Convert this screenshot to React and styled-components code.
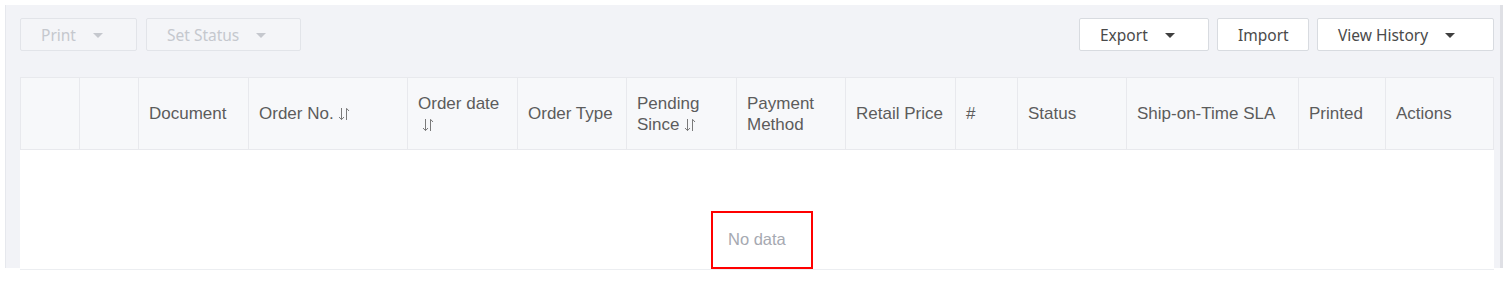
import React from "react";
import styled, { createGlobalStyle } from "styled-components";

const Global = createGlobalStyle`
  html, body { margin: 0; padding: 0; background: #ffffff; }
  body { font-family: "Liberation Sans", Arial, sans-serif; }
  * { box-sizing: border-box; }
`;

const Page = styled.div`
  width: 1508px;
  height: 281px;
  padding: 5px 5px 0 5px;
  background: #ffffff;
`;

const Panel = styled.div`
  height: 263px;
  background: #f2f3f7;
  border-left: 1px solid #e6e8ed;
  border-right: 3px solid #dfe0e5;
  padding: 13px 6px 0 14px;
  display: flex;
  flex-direction: column;
  gap: 26px;
`;

const Toolbar = styled.div`
  display: flex;
  align-items: center;
  height: 33px;
`;

const Group = styled.div`
  display: flex;
  gap: ${(p) => p.$gap}px;
  margin-left: ${(p) => (p.$right ? "auto" : "0")};
`;

const Button = styled.button`
  height: 33px;
  width: ${(p) => p.$w}px;
  display: flex;
  align-items: center;
  justify-content: flex-start;
  gap: 17px;
  padding: 0 0 0 20px;
  font-family: "Noto Sans", "Open Sans", sans-serif;
  font-size: 15.5px;
  color: ${(p) => (p.disabled ? "#c5c8ce" : "#4a4a4a")};
  background: ${(p) => (p.disabled ? "#f4f5f8" : "#ffffff")};
  border: 1px solid ${(p) => (p.disabled ? "#e2e4e9" : "#d8dbe0")};
  border-radius: 2px;
  cursor: ${(p) => (p.disabled ? "not-allowed" : "pointer")};
`;

const Caret = styled.span`
  width: 0;
  height: 0;
  border-left: 5px solid transparent;
  border-right: 5px solid transparent;
  border-top: 5px solid ${(p) => (p.$disabled ? "#c5c8ce" : "#3f3f3f")};
  margin-top: 2px;
`;

const Table = styled.div`
  flex: 1;
  width: 1474px;
  display: flex;
  flex-direction: column;
  background: #ffffff;
`;

const COLS = "59px 59px 110px 159px 110px 109px 110px 109px 110px 62px 109px 172px 87px 109px";

const HeaderRow = styled.div`
  display: grid;
  grid-template-columns: ${COLS};
  height: 73px;
  background: #f7f8fa;
  border-top: 1px solid #e8e9ed;
  border-bottom: 1px solid #e8e9ed;
`;

const HeadCell = styled.div`
  display: flex;
  align-items: center;
  padding: 0 8px 0 10px;
  border-left: 1px solid #e8e9ed;
  &:last-child { border-right: 1px solid #e8e9ed; }
  font-size: 17px;
  line-height: 21px;
  color: #5c5c5c;
`;

const HeadLabel = styled.span`
  display: block;
`;

const SortIcon = styled.svg`
  display: inline-block;
  vertical-align: -2px;
  margin-left: 4px;
`;

const Body = styled.div`
  flex: 1;
  display: flex;
  justify-content: center;
  padding-top: 61px;
  padding-left: 10px;
  border-bottom: 1px solid #eceef1;
`;

const Empty = styled.div`
  width: 102px;
  height: 58px;
  border: 2px solid #ff0000;
  display: flex;
  align-items: center;
  justify-content: flex-start;
  padding: 0 0 1px 15px;
  font-size: 16.5px;
  color: #a6a9b1;
`;

const Sort = () => (
  <SortIcon width="12" height="14" viewBox="0 0 12 14" fill="none" stroke="#7a7a7a" strokeWidth="1">
    <path d="M3.5 1v11.5M1 10L3.5 12.6L6 10" />
    <path d="M8.5 13V1.4M8.5 1.3L11 4" />
  </SortIcon>
);

const columns = [
  { label: "" },
  { label: "" },
  { label: "Document" },
  { label: "Order No.", sort: true },
  { label: "Order date", sort: true, wrap: true },
  { label: "Order Type" },
  { label: "Pending Since", sort: true, split: ["Pending", "Since"] },
  { label: "Payment Method", split: ["Payment", "Method"] },
  { label: "Retail Price" },
  { label: "#" },
  { label: "Status" },
  { label: "Ship-on-Time SLA" },
  { label: "Printed" },
  { label: "Actions" },
];

function Head({ col }) {
  if (col.split) {
    return (
      <HeadLabel>
        {col.split[0]}
        <br />
        {col.split[1]}
        {col.sort && <Sort />}
      </HeadLabel>
    );
  }
  if (col.wrap) {
    return (
      <HeadLabel>
        {col.label}
        <br />
        <Sort />
      </HeadLabel>
    );
  }
  return (
    <HeadLabel>
      {col.label}
      {col.sort && <Sort />}
    </HeadLabel>
  );
}

export default function App() {
  return (
    <>
      <Global />
      <Page>
        <Panel>
          <Toolbar>
            <Group $gap={9}>
              <Button $w={117} disabled>
                Print <Caret $disabled />
              </Button>
              <Button $w={155} disabled>
                Set Status <Caret $disabled />
              </Button>
            </Group>
            <Group $gap={8} $right>
              <Button $w={130}>
                Export <Caret />
              </Button>
              <Button $w={92}>Import</Button>
              <Button $w={177}>
                View History <Caret />
              </Button>
            </Group>
          </Toolbar>
          <Table>
            <HeaderRow>
              {columns.map((c, i) => (
                <HeadCell key={i}>
                  <Head col={c} />
                </HeadCell>
              ))}
            </HeaderRow>
            <Body>
              <Empty>No data</Empty>
            </Body>
          </Table>
        </Panel>
      </Page>
    </>
  );
}
